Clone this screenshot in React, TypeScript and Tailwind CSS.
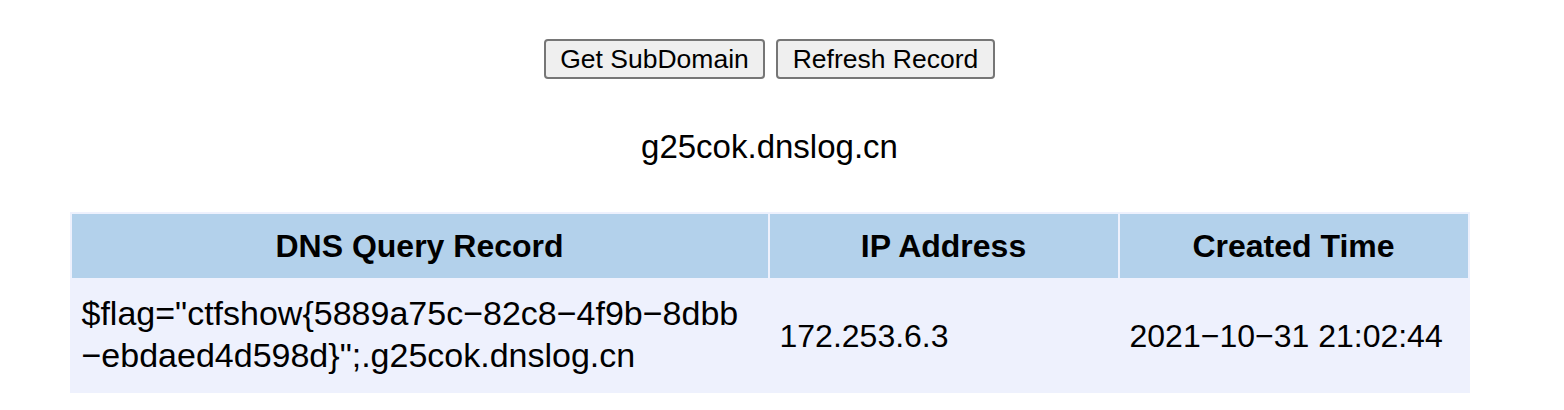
export default function App() {
  return (
    <div
      className="w-[1539px] bg-white text-black"
      style={{ fontFamily: '"Liberation Sans", Arial, sans-serif' }}
    >
      <div className="flex justify-center gap-[11px] pt-[39px]">
        <button className="h-[40px] w-[221px] rounded-[4px] border-2 border-[#767676] bg-[#efefef] text-[26.5px] leading-none text-black">
          Get SubDomain
        </button>
        <button className="h-[40px] w-[219px] rounded-[4px] border-2 border-[#767676] bg-[#efefef] text-[26.5px] leading-none text-black">
          Refresh Record
        </button>
      </div>
      <div className="mt-[47px] text-center text-[33px] leading-[42px]">g25cok.dnslog.cn</div>
      <div className="mt-[44px] flex justify-center">
        <table className="w-[1400px] table-fixed border-separate border-spacing-[2px] bg-[#eef1fd]">
          <colgroup>
            <col className="w-[696px]" />
            <col className="w-[348px]" />
            <col className="w-[348px]" />
          </colgroup>
          <thead>
            <tr>
              <th className="h-[64px] bg-[#b3d1eb] text-center text-[32px] font-bold">DNS Query Record</th>
              <th className="h-[64px] bg-[#b3d1eb] text-center text-[32px] font-bold">IP Address</th>
              <th className="h-[64px] bg-[#b3d1eb] text-center text-[32px] font-bold">Created Time</th>
            </tr>
          </thead>
          <tbody>
            <tr>
              <td className="h-[111px] bg-[#eef1fd] px-[10px] pb-[3px] text-left align-middle text-[34px] leading-[42px] whitespace-nowrap">
                $flag="ctfshow{"{"}5889a75c−82c8−4f9b−8dbb
                <br />
                −ebdaed4d598d{"}"}";.g25cok.dnslog.cn
              </td>
              <td className="h-[111px] bg-[#eef1fd] px-[10px] text-left align-middle text-[32px] leading-[42px]">172.253.6.3</td>
              <td className="h-[111px] bg-[#eef1fd] px-[10px] text-left align-middle text-[32px] leading-[42px]">2021−10−31 21:02:44</td>
            </tr>
          </tbody>
        </table>
      </div>
    </div>
  );
}
